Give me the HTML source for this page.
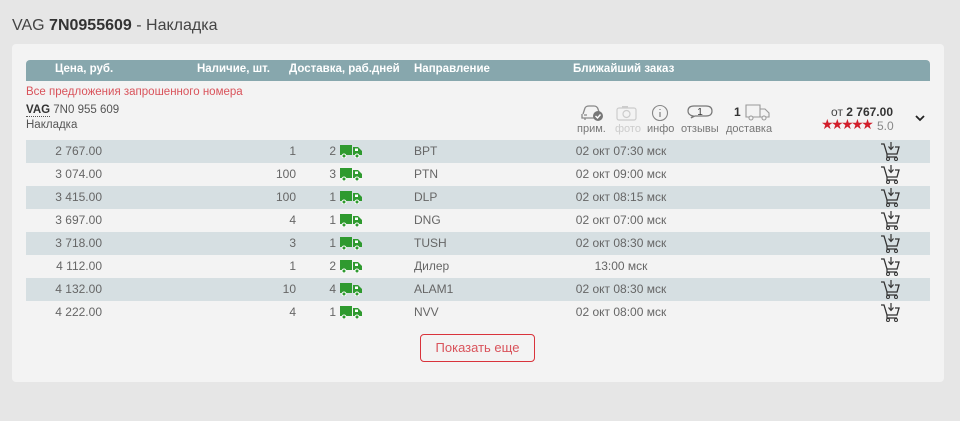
<!DOCTYPE html>
<html><head><meta charset="utf-8"><style>
*{margin:0;padding:0;box-sizing:border-box}
body{width:960px;height:421px;background:#e6e6e6;font-family:"Liberation Sans","DejaVu Sans",sans-serif;color:#555;position:relative;overflow:hidden}
.abs{position:absolute;white-space:nowrap}
h1{position:absolute;left:12px;top:17px;font-size:16px;font-weight:normal;color:#444}
h1 b{color:#333}
.panel{position:absolute;left:12px;top:44px;width:932px;height:338px;background:#f3f3f3;border-radius:4px}
.hdr{position:absolute;left:26px;top:60px;width:904px;height:21px;background:#87a7ad;border-radius:4px 4px 0 0;color:#fff;font-size:11.5px;font-weight:bold}
.hdr span{position:absolute;top:3px}
.row{position:absolute;left:26px;width:904px;height:23px;font-size:12px;color:#666}
.row.s{background:#d6dfe2}
.row span{position:absolute;top:4px}
.p{right:828px}.q{right:634px}.d{right:594px}.dir{left:388px}.dt{left:520px;width:150px;text-align:center}
.tr{position:absolute;left:314px;top:5px}
.ct{position:absolute;left:854px;top:1px}
.btn{position:absolute;left:420px;top:334px;width:115px;height:28px;border:1.5px solid #d9333b;border-radius:4px;color:#d9535b;font-size:13px;text-align:center;line-height:25px}
.ic{position:absolute;font-size:11px;color:#777;text-align:center}
</style></head><body>
<h1>VAG <b>7N0955609</b> - Накладка</h1>
<div class="panel"></div>
<div class="hdr"><span style="left:29px">Цена, руб.</span><span style="right:660px">Наличие, шт.</span><span style="left:263px">Доставка, раб.дней</span><span style="left:388px">Направление</span><span style="left:547px">Ближайший заказ</span></div>
<div class="abs" style="left:26px;top:86px;font-size:11.5px;color:#d9535b">Все предложения запрошенного номера</div>
<div class="abs" style="left:26px;top:104px;font-size:11.5px;color:#555"><b style="color:#333;border-bottom:1px dotted #555">VAG</b> 7N0 955 609</div>
<div class="abs" style="left:26px;top:119px;font-size:11.5px;color:#555">Накладка</div>
<svg class="abs" style="left:580px;top:104px" width="24" height="18" viewBox="0 0 24 18"><path d="M3 10 L5 4 Q6 2 9 2 L14 2 Q17 2 18 5 L19 8 M2 10 L2 14 L18 14 M5 14v2 M4 11h3" fill="none" stroke="#888" stroke-width="1.3"/><circle cx="18" cy="12" r="5" fill="#777"/><path d="M15.5 12l2 2 3-3.5" stroke="#fff" stroke-width="1.4" fill="none"/></svg>
<svg class="abs" style="left:616px;top:105px" width="21" height="16"><rect x="1" y="3" width="19" height="12" rx="2" fill="none" stroke="#ccc" stroke-width="1.2"/><circle cx="10.5" cy="9" r="3.5" fill="none" stroke="#ccc" stroke-width="1.2"/><rect x="6" y="1" width="6" height="2" fill="#ccc"/></svg>
<svg class="abs" style="left:651px;top:104px" width="18" height="18"><circle cx="9" cy="9" r="7.5" fill="none" stroke="#888" stroke-width="1.1"/><path d="M9 8v5M9 5v1" stroke="#888" stroke-width="1.3"/></svg>
<svg class="abs" style="left:687px;top:104px" width="26" height="17"><path d="M4 14 L6 12 Q1 11 1 7 Q1 2 7 2 L19 2 Q25 2 25 7 Q25 12 19 12 L8 12 Z" fill="none" stroke="#777" stroke-width="1.2"/><text x="13" y="11" font-size="10" text-anchor="middle" fill="#333" font-family="Liberation Sans">1</text></svg>
<div class="abs" style="left:734px;top:105px;font-size:12px;font-weight:bold;color:#333">1</div>
<svg class="abs" style="left:745px;top:103px" width="26" height="18"><path d="M1 2h14v12H1z M15 6h5l4 4v4h-9" fill="none" stroke="#999" stroke-width="1.1"/><circle cx="6" cy="15" r="2" fill="#f3f3f3" stroke="#999"/><circle cx="19" cy="15" r="2" fill="#f3f3f3" stroke="#999"/></svg>
<div class="ic" style="left:577px;top:123px">прим.</div>
<div class="ic" style="left:615px;top:123px;color:#ccc">фото</div>
<div class="ic" style="left:647px;top:123px">инфо</div>
<div class="ic" style="left:681px;top:123px">отзывы</div>
<div class="ic" style="left:726px;top:123px">доставка</div>
<div class="abs" style="right:67px;top:105px;font-size:12px;color:#444">от <b style="color:#333">2 767.00</b></div>
<div class="abs" style="left:821px;top:116px;font-size:14px;color:#d21e2b;letter-spacing:-2.5px">★★★★★</div>
<div class="abs" style="left:877px;top:119px;font-size:12px;color:#888">5.0</div>
<svg class="abs" style="left:915px;top:114px" width="10" height="8"><path d="M1 2l4 4 4-4" stroke="#222" stroke-width="1.8" fill="none"/></svg>
<div id="rows"></div>
<script>
var d=[["2 767.00","1","2","BPT","02 окт 07:30 мск"],["3 074.00","100","3","PTN","02 окт 09:00 мск"],["3 415.00","100","1","DLP","02 окт 08:15 мск"],["3 697.00","4","1","DNG","02 окт 07:00 мск"],["3 718.00","3","1","TUSH","02 окт 08:30 мск"],["4 112.00","1","2","Дилер","13:00 мск"],["4 132.00","10","4","ALAM1","02 окт 08:30 мск"],["4 222.00","4","1","NVV","02 окт 08:00 мск"]];
var h="";d.forEach(function(r,i){h+='<div class="row'+(i%2==0?' s':'')+'" style="top:'+(140+i*23)+'px"><span class="p">'+r[0]+'</span><span class="q">'+r[1]+'</span><span class="d">'+r[2]+'</span><svg class="tr" width="23" height="13"><rect x="0" y="0" width="12" height="10" fill="#2f9a2f"/><path d="M13 2h5l4 4v4h-9z" fill="#2f9a2f"/><rect x="15" y="3.5" width="3" height="2.5" fill="#fff"/><circle cx="4" cy="11" r="2" fill="#2f9a2f" stroke="#fff"/><circle cx="17" cy="11" r="2" fill="#2f9a2f" stroke="#fff"/></svg><span class="dir">'+r[3]+'</span><span class="dt">'+r[4]+'</span><svg class="ct" width="20" height="20"><path d="M1 3h3l3 10h10l2-7h-4" fill="none" stroke="#333" stroke-width="1.3"/><path d="M11 1v7M8.5 5.5l2.5 3 2.5-3" fill="none" stroke="#333" stroke-width="1.2"/><path d="M7 13v3h10" fill="none" stroke="#333" stroke-width="1.2"/><circle cx="8" cy="18" r="1.5" fill="none" stroke="#333"/><circle cx="16" cy="18" r="1.5" fill="none" stroke="#333"/></svg></div>'});
document.getElementById("rows").innerHTML=h;
</script>
<div class="btn">Показать еще</div>
</body></html>
